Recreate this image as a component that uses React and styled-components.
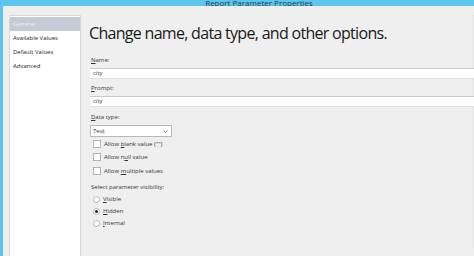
import React from 'react'
import styled, { createGlobalStyle } from 'styled-components'

const Global = createGlobalStyle`
  html, body { margin: 0; padding: 0; }
  body {
    width: 474px;
    height: 256px;
    overflow: hidden;
    font-family: "Open Sans", "Noto Sans", sans-serif;
    background: #5cc6ee;
  }
`

const Frame = styled.div`
  display: flex;
  flex-direction: column;
  width: 474px;
  height: 256px;
`

const TitleBar = styled.div`
  height: 6px;
  overflow: hidden;
  display: flex;
  justify-content: center;
  align-items: flex-end;
  padding-left: 44px;
  span {
    color: #1d3b57;
    font-size: 8px;
    line-height: 8px;
    margin-bottom: -1px;
  }
`

const Body = styled.div`
  flex: 1;
  display: flex;
  margin-left: 3px;
  background: #efefef;
  padding: 9px 0 0 6px;
  gap: 8px;
`

const Nav = styled.ul`
  list-style: none;
  margin: 0;
  width: 70px;
  padding: 1px 0 0;
  background: #fff;
  border: 1px solid #d6d6d6;
  border-bottom: none;
`

const NavItem = styled.li`
  height: 14px;
  line-height: 14px;
  padding-left: 3px;
  font-size: 6px;
  color: ${p => (p.$active ? '#eef2f6' : '#222')};
  background: ${p => (p.$active ? '#c3cbd5' : 'transparent')};
`

const Main = styled.div`
  flex: 1;
  display: flex;
  flex-direction: column;
  padding-top: 8px;
  margin-bottom: 8px;
  border-right: 1px solid #e4e4e4;
`

const Heading = styled.h1`
  margin: 0 0 13px;
  font-weight: 400;
  font-size: 16px;
  line-height: 20px;
  color: #1a1a1a;
  letter-spacing: -0.7px;
`

const Label = styled.div`
  font-size: 6px;
  color: #333;
  line-height: 9px;
  margin: ${p => p.$top || 0}px 0 3px 2px;
`

const Field = styled.div`
  height: 9px;
  background: #fff;
  border-top: 1px solid #c9c9c9;
  border-bottom: 1px solid #e0e0e0;
  font-size: 6px;
  line-height: 9px;
  padding-left: 3px;
  color: #333;
  margin-right: -2px;
  margin-left: 1px;
`

const Select = styled.div`
  width: 78px;
  height: 10px;
  margin-left: 1px;
  background: #fff;
  border: 1px solid #b8b8b8;
  font-size: 6px;
  line-height: 10px;
  padding-left: 2px;
  color: #333;
  display: flex;
  justify-content: space-between;
  align-items: center;
  svg { margin-right: 3px; }
`

const OptionList = styled.div`
  display: flex;
  flex-direction: column;
  gap: ${p => p.$gap}px;
  margin: ${p => p.$top}px 0 0 4px;
`

const Option = styled.div`
  display: flex;
  align-items: center;
  gap: 3px;
  height: 9px;
  font-size: 6px;
  color: #333;
  u { text-decoration-thickness: 0.5px; }
`

const Box = styled.span`
  width: 6px;
  height: 6px;
  background: #fff;
  border: 1px solid #b2b2b2;
`

const Radio = styled.span`
  width: 5px;
  height: 5px;
  border-radius: 50%;
  background: #fff;
  border: 1px solid #b8b8b8;
  display: flex;
  align-items: center;
  justify-content: center;
  &::after {
    content: '';
    width: 3px;
    height: 3px;
    border-radius: 50%;
    background: ${p => (p.$on ? '#222' : 'transparent')};
  }
`

export default function App() {
  return (
    <Frame>
      <Global />
      <TitleBar><span>Report Parameter Properties</span></TitleBar>
      <Body>
        <Nav>
          <NavItem $active>General</NavItem>
          <NavItem>Available Values</NavItem>
          <NavItem>Default Values</NavItem>
          <NavItem>Advanced</NavItem>
        </Nav>
        <Main>
          <Heading>Change name, data type, and other options.</Heading>
          <Label><u>N</u>ame:</Label>
          <Field>city</Field>
          <Label $top={5}><u>P</u>rompt:</Label>
          <Field>city</Field>
          <Label $top={6}><u>D</u>ata type:</Label>
          <Select>
            Text
            <svg width="5" height="3" viewBox="0 0 5 3">
              <path d="M0.5 0.5 L2.5 2.5 L4.5 0.5" fill="none" stroke="#555" strokeWidth="0.8" />
            </svg>
          </Select>
          <OptionList $gap={4.5} $top={2}>
            <Option><Box /><span>Allow <u>b</u>lank value ("")</span></Option>
            <Option><Box /><span>Allow n<u>u</u>ll value</span></Option>
            <Option><Box /><span>Allow <u>m</u>ultiple values</span></Option>
          </OptionList>
          <Label $top={7.5}>Select parameter visibility:</Label>
          <OptionList $gap={3} $top={0}>
            <Option><Radio /><span><u>V</u>isible</span></Option>
            <Option><Radio $on /><span><u>H</u>idden</span></Option>
            <Option><Radio /><span><u>I</u>nternal</span></Option>
          </OptionList>
        </Main>
      </Body>
    </Frame>
  )
}
